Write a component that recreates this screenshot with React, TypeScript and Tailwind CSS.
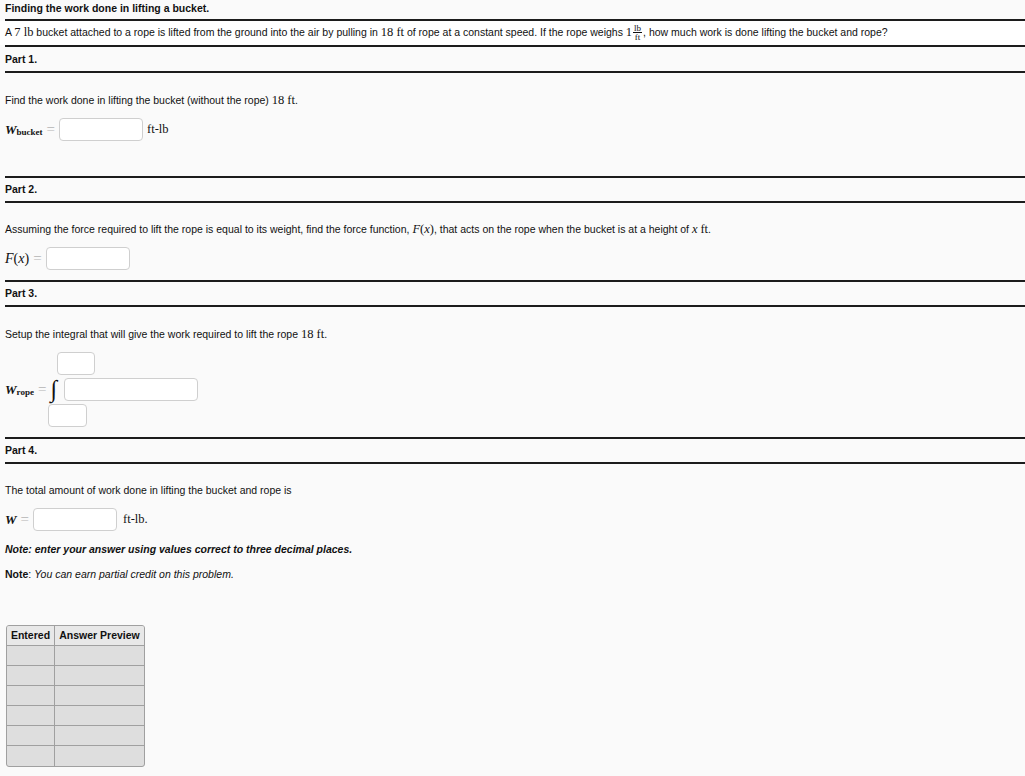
import React from "react";

const Line = () => <div className="ml-[5px] h-[2px] bg-[#1c1c1c]" />;

const Input = ({ w, h = 23 }: { w: number; h?: number }) => (
  <div
    className="bg-white border border-[#cfcfcf] rounded-[4px] shrink-0"
    style={{ width: w, height: h }}
  />
);

const M = ({ children, i = false }: { children: React.ReactNode; i?: boolean }) => (
  <span className={`font-['Liberation_Serif',serif] text-[12.5px] ${i ? "italic" : ""}`}>{children}</span>
);

const Eq = () => <span className="font-['Liberation_Serif',serif] text-[15px] text-[#b5b5b5] mx-[4px]">=</span>;

export default function App() {
  return (
    <div className="w-[1025px] min-h-[776px] bg-[#fafafa] text-[#111] font-['Liberation_Sans',Arial,sans-serif] text-[10.5px] leading-[13px]">
      <div className="h-[19px] px-[5px] pt-[2px] font-bold">Finding the work done in lifting a bucket.</div>
      <Line />
      <div className="h-[24px] bg-white px-[5px] flex items-center">
        <span>
          A <M>7 lb</M> bucket attached to a rope is lifted from the ground into the air by pulling in <M>18 ft</M> of rope at a constant speed. If the rope weighs <M>1</M>
          <span className="inline-flex flex-col items-center align-middle mx-[1px] font-['Liberation_Serif',serif] text-[9px] leading-[8px] relative -top-[1px]">
            <span>lb</span>
            <span className="border-t border-[#111] w-[9px] text-center">ft</span>
          </span>
          , how much work is done lifting the bucket and rope?
        </span>
      </div>
      <Line />
      <div className="h-[24px] px-[5px] flex items-center font-bold">Part 1.</div>
      <Line />
      <div className="h-[103px] px-[5px] pt-[21px]">
        <div>
          Find the work done in lifting the bucket (without the rope) <M>18 ft</M>.
        </div>
        <div className="flex items-center mt-[11px]">
          <span className="font-['Liberation_Serif',serif] italic font-bold text-[13px]">W</span>
          <span className="font-['Liberation_Serif',serif] font-bold text-[9px] relative top-[3px]">bucket</span>
          <Eq />
          <Input w={84} />
          <span className="ml-[4px]"><M>ft-lb</M></span>
        </div>
      </div>
      <Line />
      <div className="h-[23px] px-[5px] flex items-center font-bold">Part 2.</div>
      <Line />
      <div className="h-[77px] px-[5px] pt-[20px]">
        <div>
          Assuming the force required to lift the rope is equal to its weight, find the force function, <M i>F</M><M>(</M><M i>x</M><M>)</M>, that acts on the rope when the bucket is at a height of <M i>x</M> <M>ft</M>.
        </div>
        <div className="flex items-center mt-[11px]">
          <span className="font-['Liberation_Serif',serif] text-[14px]"><i>F</i>(<i>x</i>)</span>
          <Eq />
          <Input w={84} />
        </div>
      </div>
      <Line />
      <div className="h-[23px] px-[5px] flex items-center font-bold">Part 3.</div>
      <Line />
      <div className="h-[130px] px-[5px] pt-[21px]">
        <div>
          Setup the integral that will give the work required to lift the rope <M>18 ft</M>.
        </div>
        <div className="flex items-center mt-[11px]">
          <span className="font-['Liberation_Serif',serif] italic font-bold text-[13px]">W</span>
          <span className="font-['Liberation_Serif',serif] font-bold text-[9px] relative top-[3px]">rope</span>
          <Eq />
          <div className="flex flex-col -ml-[2px]">
            <div className="ml-[9px]"><Input w={38} /></div>
            <div className="flex items-center mt-[3px]">
              <span className="font-['Liberation_Serif',serif] italic text-[24px] leading-[23px] ml-[2px]">∫</span>
              <div className="ml-[7px]"><Input w={134} /></div>
            </div>
            <div className="mt-[3px]"><Input w={39} /></div>
          </div>
        </div>
      </div>
      <Line />
      <div className="h-[23px] px-[5px] flex items-center font-bold">Part 4.</div>
      <Line />
      <div className="px-[5px] pt-[20px]">
        <div>The total amount of work done in lifting the bucket and rope is</div>
        <div className="flex items-center mt-[11px]">
          <span className="font-['Liberation_Serif',serif] italic font-bold text-[13px]">W</span>
          <Eq />
          <Input w={84} />
          <span className="ml-[6px]"><M>ft-lb.</M></span>
        </div>
        <div className="mt-[12px] font-bold italic">Note: enter your answer using values correct to three decimal places.</div>
        <div className="mt-[12px]">
          <span className="font-bold">Note</span>: <span className="italic">You can earn partial credit on this problem.</span>
        </div>
        <div className="mt-[44px] ml-[1px] w-[139px] border border-[#a0a0a0] rounded-[3px] overflow-hidden bg-[#dedede]">
          <div className="grid grid-cols-[48px_1fr] h-[20px] bg-[#e8e8e8] border-b border-[#a0a0a0] font-bold">
            <div className="flex items-center justify-center border-r border-[#a0a0a0]">Entered</div>
            <div className="flex items-center justify-center">Answer Preview</div>
          </div>
          {[0, 1, 2, 3, 4, 5].map((r) => (
            <div key={r} className={`grid grid-cols-[48px_1fr] h-[20px] ${r < 5 ? "border-b border-[#a0a0a0]" : ""}`}>
              <div className="border-r border-[#a0a0a0]" />
              <div />
            </div>
          ))}
        </div>
      </div>
    </div>
  );
}
